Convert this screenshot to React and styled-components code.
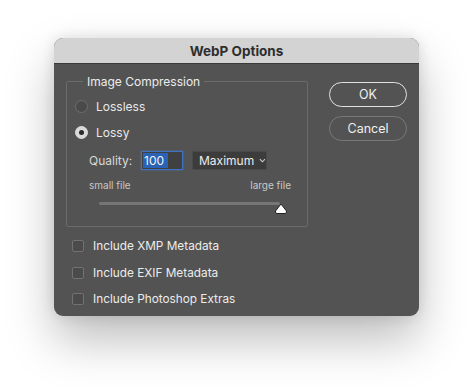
import React from 'react'
import styled, { createGlobalStyle } from 'styled-components'

const Global = createGlobalStyle`
  html, body {
    margin: 0;
    background: #ffffff;
    font-family: Inter, "Liberation Sans", sans-serif;
  }
`

const Page = styled.div`
  width: 474px;
  height: 389px;
  padding: 38px 0 0 54px;
  box-sizing: border-box;
`

const Dialog = styled.div`
  width: 365px;
  height: 278px;
  border-radius: 9px;
  overflow: hidden;
  background: #535353;
  box-shadow: 0 24px 48px rgba(0, 0, 0, 0.26), 0 0 14px rgba(0, 0, 0, 0.12);
  display: flex;
  flex-direction: column;
`

const TitleBar = styled.div`
  height: 25px;
  background: #d3d3d3;
  border-bottom: 1px solid #3a3a3a;
  display: flex;
  align-items: center;
  justify-content: center;
  font-size: 13.5px;
  font-weight: 700;
  color: #2e2e2e;
`

const Body = styled.div`
  flex: 1;
  display: flex;
  padding: 0 11px 0 12px;
  color: #e8e8e8;
  font-size: 12px;
`

const Main = styled.div`
  width: 242px;
  display: flex;
  flex-direction: column;
`

const Group = styled.fieldset`
  margin: 10px 0 0 0;
  padding: 4px 0 0 8px;
  height: 153px;
  box-sizing: border-box;
  border: 1px solid #6b6b6b;
  border-radius: 2px;
`

const Legend = styled.legend`
  padding: 0 4px;
  margin-left: 8px;
  font-size: 12px;
  color: #ececec;
`

const Option = styled.div`
  display: flex;
  align-items: center;
  height: 26px;
  gap: 8px;
  font-size: 12px;
`

const Radio = styled.span`
  flex-shrink: 0;
  width: 13px;
  height: 13px;
  border-radius: 50%;
  box-sizing: border-box;
  display: flex;
  align-items: center;
  justify-content: center;
  border: 1px solid ${p => (p.on ? '#dadada' : '#6e6e6e')};
  background: ${p => (p.on ? '#dadada' : '#4a4a4a')};
  &::after {
    content: '';
    width: 5px;
    height: 5px;
    border-radius: 50%;
    background: ${p => (p.on ? '#2a2a2a' : 'transparent')};
  }
`

const QualityRow = styled.div`
  display: flex;
  align-items: center;
  margin: 6px 0 0 14px;
  height: 19px;
`

const QLabel = styled.span`
  width: 52px;
  color: #d8d8d8;
`

const Field = styled.div`
  flex-shrink: 0;
  width: 42px;
  height: 19px;
  box-sizing: border-box;
  border: 1px solid #3f74c4;
  box-shadow: 0 0 2px rgba(70, 130, 220, 0.6);
  background: #404040;
  display: flex;
  align-items: center;
  padding-left: 1px;
`

const Selected = styled.span`
  background: #2a62b6;
  color: #f4f4f4;
  padding: 0 4px 0 1px;
  line-height: 15px;
  font-size: 12px;
`

const Select = styled.div`
  flex-shrink: 0;
  margin-left: 9px;
  width: 75px;
  height: 19px;
  box-sizing: border-box;
  background: #3c3c3c;
  border: 1px solid #4a4a4a;
  display: flex;
  align-items: center;
  padding-left: 6px;
  gap: 5px;
  font-size: 12px;
  color: #ececec;
  white-space: nowrap;
`

const Ends = styled.div`
  display: flex;
  justify-content: space-between;
  margin: 9px 16px 0 14px;
  font-size: 10px;
  color: #c8c8c8;
`

const Track = styled.div`
  position: relative;
  margin: 11px 27px 0 24px;
  height: 3px;
  border-radius: 2px;
  background: #767676;
`

const Thumb = styled.svg`
  position: absolute;
  right: -8px;
  top: 1px;
`

const Checks = styled.div`
  display: flex;
  flex-direction: column;
  margin-top: 6px;
  padding-left: 6px;
`

const Check = styled.div`
  display: flex;
  align-items: center;
  height: 26.5px;
  gap: 9px;
  font-size: 11.8px;
  color: #ececec;
`

const Box = styled.span`
  flex-shrink: 0;
  width: 12px;
  height: 12px;
  box-sizing: border-box;
  border: 1px solid #727272;
  border-radius: 2px;
  background: #4b4b4b;
`

const Side = styled.div`
  margin-left: 21px;
  padding-top: 18px;
  display: flex;
  flex-direction: column;
  gap: 9px;
`

const Button = styled.div`
  width: 78px;
  height: 25px;
  box-sizing: border-box;
  border-radius: 13px;
  border: 1px solid ${p => (p.primary ? '#e2e2e2' : '#7a7a7a')};
  display: flex;
  align-items: center;
  justify-content: center;
  font-size: 12.5px;
  color: #f0f0f0;
`

export default function App() {
  return (
    <Page>
      <Global />
      <Dialog>
        <TitleBar>WebP Options</TitleBar>
        <Body>
          <Main>
            <Group>
              <Legend>Image Compression</Legend>
              <Option><Radio />Lossless</Option>
              <Option><Radio on />Lossy</Option>
              <QualityRow>
                <QLabel>Quality:</QLabel>
                <Field><Selected>100</Selected></Field>
                <Select>
                  Maximum
                  <svg width="8" height="5" viewBox="0 0 8 5">
                    <path d="M1 1 L4 4 L7 1" fill="none" stroke="#d0d0d0" strokeWidth="1.2" />
                  </svg>
                </Select>
              </QualityRow>
              <Ends><span>small file</span><span>large file</span></Ends>
              <Track>
                <Thumb width="14" height="12" viewBox="0 0 14 12">
                  <path d="M7 1 L12.5 8 Q13 10.5 11 10.5 L3 10.5 Q1 10.5 1.5 8 Z" fill="#ffffff" stroke="#222" strokeWidth="1" />
                </Thumb>
              </Track>
            </Group>
            <Checks>
              <Check><Box />Include XMP Metadata</Check>
              <Check><Box />Include EXIF Metadata</Check>
              <Check><Box />Include Photoshop Extras</Check>
            </Checks>
          </Main>
          <Side>
            <Button primary>OK</Button>
            <Button>Cancel</Button>
          </Side>
        </Body>
      </Dialog>
    </Page>
  )
}
